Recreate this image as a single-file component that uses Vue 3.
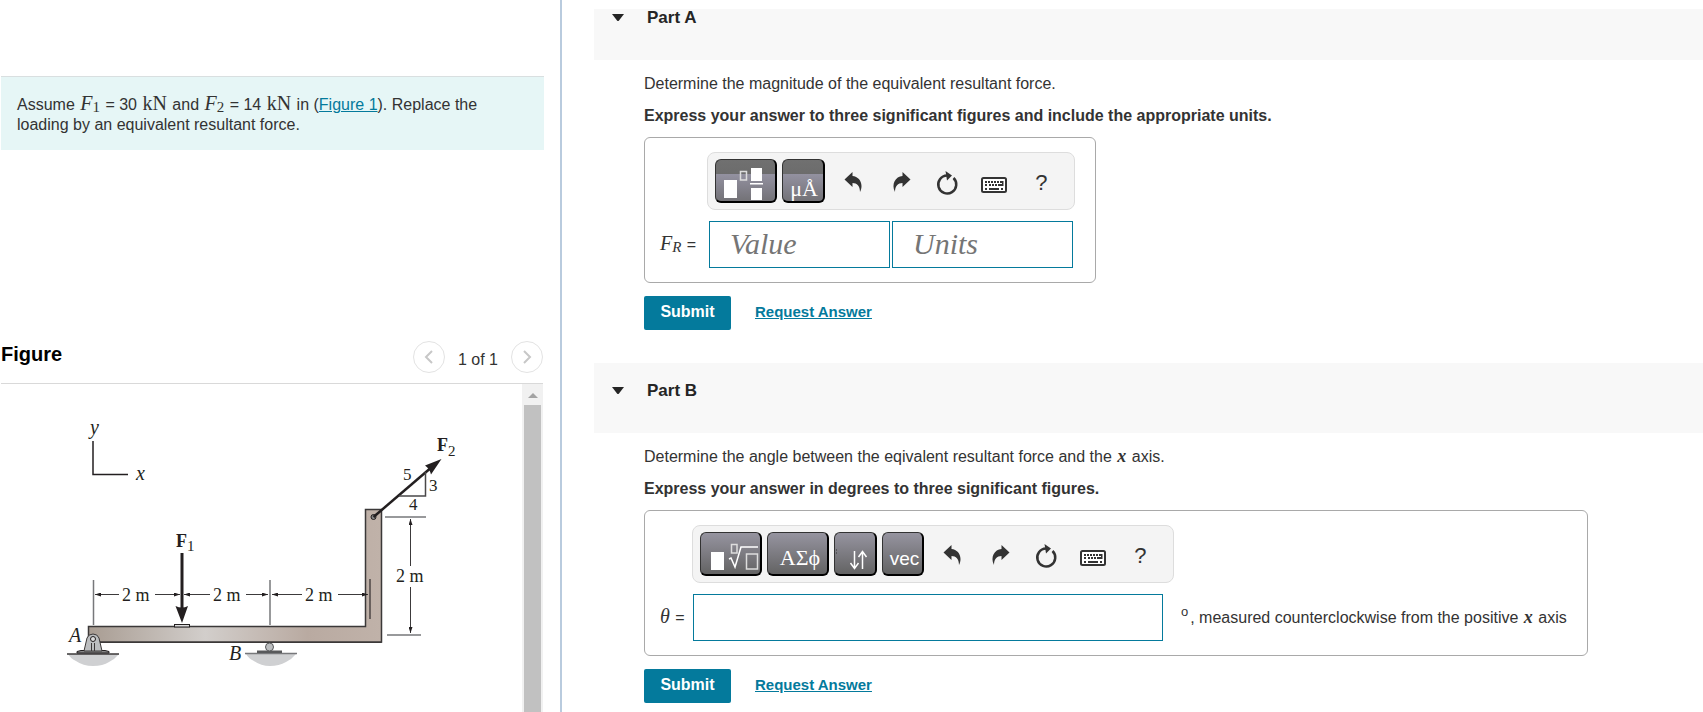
<script setup>
import { ref } from 'vue'

const value = ref('')
const units = ref('')
const theta = ref('')
const openA = ref(true)
const openB = ref(true)

const actions = ['undo', 'redo', 'reset', 'keyboard shortcuts', 'help']

// small keys of the keyboard icon, one list of x positions per row
const keyRows = [
  { y: 7, xs: [4, 7, 10, 13, 16, 19] },
  { y: 10, xs: [4, 8, 11, 14, 17] }
]
</script>

<template>
  <div class="page">
    <aside class="side">
      <div class="intro">
        Assume <span class="math"><i>F</i><sub>1</sub></span> = 30 <span class="math">kN</span> and
        <span class="math"><i>F</i><sub>2</sub></span> = 14 <span class="math">kN</span> in
        (<a href="#figure">Figure 1</a>). Replace the<br>
        loading by an equivalent resultant force.
      </div>

      <section id="figure" class="figure">
        <div class="figure-head">
          <h2>Figure</h2>
          <div class="pager">
            <button class="round" aria-label="Previous figure">
              <svg width="12" height="16" viewBox="0 0 12 16"><path d="M9 2 3 8l6 6" /></svg>
            </button>
            <span>1 of 1</span>
            <button class="round" aria-label="Next figure">
              <svg width="12" height="16" viewBox="0 0 12 16"><path d="m3 2 6 6-6 6" /></svg>
            </button>
          </div>
        </div>

        <div class="figure-body">
          <svg class="diagram" width="521" height="328" viewBox="1 384 521 328">
            <defs>
              <linearGradient id="beam" x1="88" x2="381" y1="0" y2="0" gradientUnits="userSpaceOnUse">
                <stop offset="0" stop-color="#a89c92" />
                <stop offset="0.4" stop-color="#d2cecb" />
                <stop offset="0.75" stop-color="#b9aaa1" />
                <stop offset="1" stop-color="#c0b2a9" />
              </linearGradient>
              <marker id="tip" viewBox="0 0 6 4" refX="6" refY="2" markerWidth="6" markerHeight="4"
                markerUnits="userSpaceOnUse" orient="auto-start-reverse">
                <path d="M0 0 6 2 0 4z" fill="#231f20" />
              </marker>
            </defs>

            <!-- axes -->
            <path d="M93 441v33.500h35" fill="none" stroke="#231f20" stroke-width="1.500" />
            <text x="90" y="434" class="it">y</text>
            <text x="136" y="480" class="it">x</text>

            <!-- beam -->
            <path d="M88.500 626.500h277v-117h16v132.500h-293z" fill="url(#beam)" stroke="#3b3838" stroke-width="1.500" />
            <path d="M381.500 509v133.500H90" fill="none" stroke="#3b3838" />
            <path d="M370 579v40" stroke="#4d4644" stroke-width="1.500" />
            <rect x="174.500" y="624.500" width="15" height="2.500" fill="#ddd" stroke="#231f20" />

            <!-- dimensions -->
            <g stroke="#77787b" stroke-width="1.500">
              <path d="M93.500 580v45M270 580v45M385 517h41M387 635h34" />
            </g>
            <g stroke="#3c3a3b" stroke-width="1">
              <path d="M119 594.500H95" marker-end="url(#tip)" />
              <path d="M155 594.500h25" marker-end="url(#tip)" />
              <path d="M210 594.500h-26" marker-end="url(#tip)" />
              <path d="M246 594.500h22" marker-end="url(#tip)" />
              <path d="M302 594.500h-30" marker-end="url(#tip)" />
              <path d="M338 594.500h30" marker-end="url(#tip)" />
              <path d="M410.500 566v-47" marker-end="url(#tip)" />
              <path d="M410.500 587v46" marker-end="url(#tip)" />
            </g>
            <text x="122" y="601">2 m</text>
            <text x="213" y="601">2 m</text>
            <text x="305" y="601">2 m</text>
            <text x="396" y="582">2 m</text>

            <!-- forces -->
            <path d="M182 553v56" stroke="#231f20" stroke-width="3" />
            <path d="M175.500 606q6.500 3 12.500 0l-6 17z" fill="#231f20" />
            <text x="176" y="547" class="bold">F</text>
            <text x="187" y="551" class="small">1</text>
            <circle cx="373.500" cy="517" r="2.500" fill="#888" stroke="#231f20" />
            <path d="m373.500 517 56-48" stroke="#231f20" stroke-width="2.500" />
            <path d="m441.500 459-16.500 6.500q4.500 3 6 9z" fill="#231f20" />
            <path d="M399 496h26.500v-24" fill="none" stroke="#4a4849" stroke-width="1.500" />
            <text x="437" y="451" class="bold">F</text>
            <text x="448" y="456" class="small">2</text>
            <text x="403" y="480" class="num">5</text>
            <text x="429" y="491" class="num">3</text>
            <text x="409" y="510" class="num">4</text>

            <!-- pin support A -->
            <path d="M68 654q3 5 8 7 7 5 17 5t16-4q6-3 10-8z" fill="#cfd0d2" />
            <path d="M67 654h52" stroke="#3b3838" stroke-width="1.500" />
            <path d="M77 653v-1.500l4-1h24l4 1v1.500z" fill="#888" stroke="#231f20" />
            <path d="M84 651l3-13q1.500-4 6-4t6 4l3 13z" fill="#bcbec0" stroke="#3b3838" />
            <path d="M91.500 651v-8M94.500 651v-8" stroke="#3b3838" />
            <circle cx="93" cy="639" r="2.500" fill="#ddd" stroke="#231f20" />
            <text x="69" y="642" class="it">A</text>

            <!-- roller support B -->
            <path d="M246 654q3 5 8 7 7 5 16 5t16-4q6-3 10-8z" fill="#cfd0d2" />
            <path d="M245 653.500h52" stroke="#77787b" stroke-width="1.500" />
            <path d="M257 650.500h25v2.500h-25z" fill="#58595b" />
            <circle cx="269.500" cy="647" r="4" fill="#bcbec0" stroke="#58595b" />
            <text x="229" y="660" class="it">B</text>
          </svg>
          <div class="scrollbar">
            <svg class="scroll-up" width="21" height="21" viewBox="0 0 21 21"><path d="M6 14h10l-5-5z" fill="#a3a3a3" /></svg>
            <div class="thumb"></div>
          </div>
        </div>
      </section>
    </aside>

    <main class="main">
      <section>
        <header class="part-head cut">
          <button class="toggle" :aria-expanded="openA" @click="openA = !openA">
            <svg width="14" height="8" viewBox="0 0 14 8"><path d="M1 0h12L8 6.500q-1 1-2 0z" fill="#252525" /></svg>
            Part A
          </button>
        </header>
        <div v-show="openA" class="part-body">
          <p>Determine the magnitude of the equivalent resultant force.</p>
          <p class="strong">Express your answer to three significant figures and include the appropriate units.</p>
          <div class="answer">
            <div class="row">
              <span class="label wide"></span>
              <div class="toolbar">
                <button class="tool two-tone" aria-label="Templates">
                  <svg width="59" height="41" viewBox="2 1 59 41">
                    <path d="M10 21h13v18H10zM37 9h11v13H37zM36 24h13v1.500H36zM37 29h11v12H37z" fill="#fff" />
                    <path d="M26.500 12.500h6v8.500h-6z" fill="none" stroke="#ddd" stroke-width="1.500" />
                  </svg>
                </button>
                <button class="tool two-tone serif symbols" aria-label="Symbols">μÅ</button>
                <button v-for="a in actions" :key="a" class="action" :aria-label="a">
                  <svg v-if="a === 'undo'" width="20" height="26" viewBox="0 0 20 26">
                    <path d="M1.500 9.500 9.500 2v4c7 .5 11.500 8 7.500 16 0-6-3-9-7.500-9v4z" />
                  </svg>
                  <svg v-else-if="a === 'redo'" width="24" height="26" viewBox="-4 0 24 26">
                    <path d="M18.500 9.500 10.500 2v4C3.500 6.500-1 14 3 22c0-6 3-9 7.500-9v4z" />
                  </svg>
                  <svg v-else-if="a === 'reset'" width="24" height="26" viewBox="0 0 24 26">
                    <path d="M12 5.500a9 9 0 1 0 6.500 2.500" fill="none" stroke="#333" stroke-width="2.500" />
                    <path d="m10.500 1 6.500 4.500-5 5z" />
                  </svg>
                  <svg v-else-if="a === 'keyboard shortcuts'" class="kb" width="26" height="18" viewBox="0 0 26 18">
                    <rect x="1" y="2" width="24" height="14" rx="1.500" fill="#fff" stroke="#333" stroke-width="2" />
                    <template v-for="r in keyRows" :key="r.y">
                      <rect v-for="x in r.xs" :key="x" :x="x" :y="r.y - 2" width="2" height="2" />
                    </template>
                    <path d="M4 12h2v2H4zM8 12h10v2H8zM20 12h2v2h-2zM21 5h1.500v5H19V8h2z" />
                  </svg>
                  <span v-else>?</span>
                </button>
              </div>
            </div>
            <div class="row fields">
              <label class="label wide" for="value"><span class="math"><i>F</i><sub><i>R</i></sub></span> =</label>
              <input id="value" v-model="value" class="field half" placeholder="Value">
              <input id="units" v-model="units" class="field half" placeholder="Units" aria-label="Units">
            </div>
          </div>
          <div class="actions">
            <button class="submit">Submit</button>
            <a href="#answer-a">Request Answer</a>
          </div>
        </div>
      </section>

      <section>
        <header class="part-head">
          <button class="toggle" :aria-expanded="openB" @click="openB = !openB">
            <svg width="14" height="8" viewBox="0 0 14 8"><path d="M1 0h12L8 6.500q-1 1-2 0z" fill="#252525" /></svg>
            Part B
          </button>
        </header>
        <div v-show="openB" class="part-body">
          <p>Determine the angle between the eqivalent resultant force and the <i class="math var">x</i> axis.</p>
          <p class="strong">Express your answer in degrees to three significant figures.</p>
          <div class="answer">
            <div class="row">
              <span class="label"></span>
              <div class="toolbar">
                <button class="tool" aria-label="Templates">
                  <svg width="59" height="41" viewBox="2 1 59 41">
                    <path d="M12 20h13v18H12z" fill="#fff" />
                    <path d="M32.500 12.500h5.500v8.500h-5.500z" fill="none" stroke="#ddd" stroke-width="1.500" />
                    <path d="m30 27 2-1 4 9 6-20h17" fill="none" stroke="#fff" stroke-width="1.500" />
                    <path d="M47.500 22h11v15h-11z" fill="none" stroke="#ddd" stroke-width="1.500" />
                  </svg>
                </button>
                <button class="tool serif greek" aria-label="Greek letters">ΑΣϕ</button>
                <button class="tool" aria-label="Arrows">
                  <svg width="40" height="41" viewBox="2 1 40 41">
                    <path d="M3 17.500h1v1H3zM3 20.500h1v1H3z" fill="#333" />
                    <path d="M21.500 19v17m-4-5 4 5.500 4-5.500M29.500 37V20m-4 5 4-5.500 4 5.500" fill="none" stroke="#fff" stroke-width="1.500" />
                  </svg>
                </button>
                <button class="tool vec" aria-label="Vector">vec</button>
                <button v-for="a in actions" :key="a" class="action" :aria-label="a">
                  <svg v-if="a === 'undo'" width="20" height="26" viewBox="0 0 20 26">
                    <path d="M1.500 9.500 9.500 2v4c7 .5 11.500 8 7.500 16 0-6-3-9-7.500-9v4z" />
                  </svg>
                  <svg v-else-if="a === 'redo'" width="24" height="26" viewBox="-4 0 24 26">
                    <path d="M18.500 9.500 10.500 2v4C3.500 6.500-1 14 3 22c0-6 3-9 7.500-9v4z" />
                  </svg>
                  <svg v-else-if="a === 'reset'" width="24" height="26" viewBox="0 0 24 26">
                    <path d="M12 5.500a9 9 0 1 0 6.500 2.500" fill="none" stroke="#333" stroke-width="2.500" />
                    <path d="m10.500 1 6.500 4.500-5 5z" />
                  </svg>
                  <svg v-else-if="a === 'keyboard shortcuts'" class="kb" width="26" height="18" viewBox="0 0 26 18">
                    <rect x="1" y="2" width="24" height="14" rx="1.500" fill="#fff" stroke="#333" stroke-width="2" />
                    <template v-for="r in keyRows" :key="r.y">
                      <rect v-for="x in r.xs" :key="x" :x="x" :y="r.y - 2" width="2" height="2" />
                    </template>
                    <path d="M4 12h2v2H4zM8 12h10v2H8zM20 12h2v2h-2zM21 5h1.500v5H19V8h2z" />
                  </svg>
                  <span v-else>?</span>
                </button>
              </div>
            </div>
            <div class="row fields">
              <label class="label" for="theta"><i class="math">θ</i> =</label>
              <input id="theta" v-model="theta" class="field">
              <span class="suffix"><sup>o</sup>, measured counterclockwise from the positive <i class="math var">x</i> axis</span>
            </div>
          </div>
          <div class="actions">
            <button class="submit">Submit</button>
            <a href="#answer-b">Request Answer</a>
          </div>
        </div>
      </section>
    </main>
  </div>
</template>

<style>
body {
  margin: 0;
  background: #fff;
}
</style>

<style scoped>
.page {
  display: flex;
  height: 100vh;
  overflow: hidden;
  font: 16px/20px "Liberation Sans", Arial, sans-serif;
  color: #333;
}

button {
  font: inherit;
  color: inherit;
  border: 0;
  padding: 0;
  background: none;
  cursor: pointer;
}

a {
  color: #047a9c;
}

.math {
  margin: 0 1px;
  font-family: "Liberation Serif", "Times New Roman", serif;
  font-size: 20px;
  line-height: 16px;
}

.math sub {
  font-size: 15px;
  line-height: 0;
  vertical-align: -2px;
}

.math.var {
  font-size: 18px;
  font-weight: bold;
}

/* left column */
.side {
  box-sizing: border-box;
  width: 33%;
  flex-shrink: 0;
  display: flex;
  flex-direction: column;
  padding: 76px 16px 0 1px;
  border-right: 2px solid #b9cbde;
}

.intro {
  padding: 18px 40px 15px 16px;
  border-top: 1px solid #d9dfe0;
  background: #e6f6f6;
}

.figure {
  flex: 1;
  min-height: 0;
  display: flex;
  flex-direction: column;
  margin: 191px 1px 0 0;
}

.figure-head {
  display: flex;
  justify-content: space-between;
  padding-bottom: 10px;
  border-bottom: 1px solid #d9d9d9;
}

.figure-head h2 {
  margin: 0;
  padding-top: 1px;
  font-size: 20px;
  line-height: 24px;
  color: #000;
}

.pager {
  display: flex;
  align-items: center;
  gap: 13px;
}

.pager span {
  padding-top: 5px;
}

.round {
  width: 32px;
  height: 32px;
  display: flex;
  align-items: center;
  justify-content: center;
  border: 1px solid #e3e3e3;
  border-radius: 50%;
}

.round path {
  fill: none;
  stroke: #c7c7c7;
  stroke-width: 2;
}

.figure-body {
  flex: 1;
  min-height: 0;
  display: flex;
  justify-content: space-between;
  overflow: hidden;
}

.diagram {
  flex-shrink: 0;
}

.diagram text {
  font-family: "Liberation Serif", "Times New Roman", serif;
  font-size: 18px;
  fill: #231f20;
}

.diagram .it {
  font-size: 20px;
  font-style: italic;
}

.diagram .bold {
  font-weight: bold;
}

.diagram .small {
  font-size: 15px;
}

.diagram .num {
  font-size: 17px;
}

.scrollbar {
  width: 21px;
  display: flex;
  flex-direction: column;
  background: #f1f1f1;
}

.scroll-up {
  flex-shrink: 0;
}

.thumb {
  flex: 1;
  margin: 0 2px;
  background: #c1c1c1;
}

/* right column */
.main {
  flex: 1;
  min-width: 0;
  padding: 9px 0 0 32px;
}

.part-head {
  height: 51px;
  padding: 19px 0 0 17px;
  background: #f8f8f8;
}

.part-head.cut {
  height: 51px;
  padding-top: 0;
}

.toggle {
  display: flex;
  align-items: center;
  gap: 22px;
  font-size: 17px;
  line-height: 18px;
  font-weight: bold;
  color: #252525;
}

.part-body {
  padding: 14px 0 33px 50px;
}

.part-body p {
  margin: 0 0 12px;
}

.part-body .strong {
  margin-bottom: 11px;
  font-weight: bold;
}

.answer {
  display: inline-flex;
  flex-direction: column;
  gap: 11px;
  box-sizing: border-box;
  height: 146px;
  padding: 14px 20px 14px 14px;
  border: 1px solid #a9a9a9;
  border-radius: 6px;
  vertical-align: top;
}

.row {
  display: flex;
}

.label {
  width: 33px;
  flex-shrink: 0;
  white-space: nowrap;
}

.label.wide {
  width: 48px;
}

.fields {
  align-items: center;
}

.toolbar {
  box-sizing: border-box;
  display: flex;
  height: 58px;
  gap: 5px;
  padding: 6px 9px 6px 7px;
  border: 1px solid #ddd;
  border-radius: 8px;
  background: #f4f4f4;
}

.tool {
  box-sizing: border-box;
  height: 44px;
  overflow: hidden;
  border: 1px solid #333;
  border-right: 2px solid #000;
  border-bottom: 2px solid #000;
  border-radius: 6px;
  color: #fff;
  background: linear-gradient(#9694a0, #636363);
}

.tool svg {
  display: block;
}

.two-tone {
  background: linear-gradient(#707070, #6c6c6c 35%, #9391a0 35%, #737277);
}

.serif {
  font-family: "Liberation Serif", "Times New Roman", serif;
  font-size: 22px;
}

.symbols {
  width: 43px;
  padding: 16px 0 0 2px;
}

.greek {
  width: 62px;
  padding: 9px 0 0 5px;
}

.vec {
  width: 42px;
  padding: 10px 0 0 4px;
  font-size: 19px;
}

.action {
  width: 47px;
  display: flex;
  align-items: center;
  justify-content: center;
  padding-top: 4px;
  font-size: 22px;
}

.action + .action {
  margin-left: -5px;
}

.action svg {
  fill: #333;
}

.action .kb {
  padding-top: 4px;
}

.field {
  box-sizing: border-box;
  width: 470px;
  height: 47px;
  margin: 0 0 0 1px;
  padding: 0 20px 2px;
  border: 1px solid #047a9c;
  border-radius: 0;
  background: #fff;
  font: 30px "Liberation Serif", "Times New Roman", serif;
  outline: none;
}

.field.half {
  width: 181px;
  margin-left: 2px;
}

.field::placeholder {
  color: #757575;
  font-style: italic;
  opacity: 1;
}

.suffix {
  padding-left: 18px;
  white-space: nowrap;
}

.suffix sup {
  margin-right: 2px;
  font-size: 13px;
  line-height: 0;
  vertical-align: 7px;
}

.actions {
  display: flex;
  align-items: center;
  gap: 24px;
  margin-top: 13px;
}

.actions a {
  padding-bottom: 2px;
  font-size: 15px;
  line-height: 18px;
  font-weight: bold;
}

.submit {
  width: 87px;
  height: 34px;
  padding-bottom: 2px;
  border-radius: 2px;
  background: #047a9c;
  color: #fff;
  font-size: 16px;
  font-weight: bold;
}
</style>
